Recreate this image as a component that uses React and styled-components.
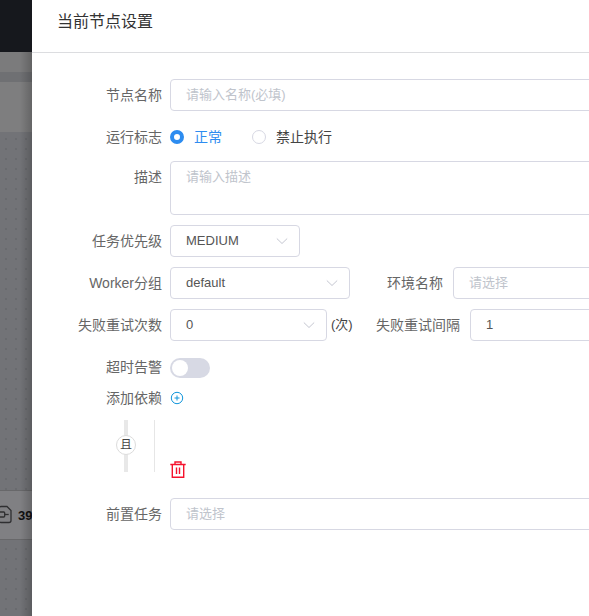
import React from "react";
import styled, { createGlobalStyle } from "styled-components";

const GlobalStyle = createGlobalStyle`
  html, body {
    margin: 0;
    padding: 0;
    background: #fff;
  }
  body {
    font-family: "Liberation Sans", "Noto Sans CJK SC", sans-serif;
    -webkit-font-smoothing: antialiased;
  }
`;

const Page = styled.div`
  display: flex;
  width: 589px;
  height: 616px;
  overflow: hidden;
`;

const Backdrop = styled.div`
  position: relative;
  width: 32px;
  flex: none;
  display: flex;
  flex-direction: column;
  overflow: hidden;
  background-color: #727377;
  background-image: radial-gradient(circle, #606165 0.5px, transparent 0.9px);
  background-size: 10px 10px;
  background-position: 1px 4px;

  &::after {
    content: "";
    position: absolute;
    inset: 52px 0 0 0;
    background: linear-gradient(90deg, rgba(0, 0, 0, 0) 0, rgba(0, 0, 0, 0) 20px, rgba(0, 0, 0, 0.2) 32px);
  }
`;

const Topbar = styled.div`
  height: 52px;
  flex: none;
  background: #16181d;
`;

const Ribbon = styled.div`
  height: 80px;
  flex: none;
  background: linear-gradient(
    180deg,
    #7b7b7c 0,
    #7b7b7c 20px,
    #6f7073 20px,
    #6f7073 30px,
    #7e7e7f 30px,
    #7e7e7f 100%
  );
`;

const NodeCard = styled.div`
  position: absolute;
  left: -40px;
  top: 490px;
  width: 140px;
  height: 50px;
  display: flex;
  align-items: center;
  gap: 5px;
  padding-left: 36px;
  box-sizing: border-box;
  color: #111;
  font-size: 13px;
  font-weight: 700;
  background: #808083;
  border-top: 1px solid #68686a;
  border-bottom: 1px solid #68686a;
`;

const Drawer = styled.div`
  flex: 1;
  min-width: 0;
  display: flex;
  flex-direction: column;
  background: #fff;
`;

const DrawerHeader = styled.div`
  height: 53px;
  flex: none;
  box-sizing: border-box;
  padding: 12px 0 0 25px;
  font-size: 16px;
  line-height: 20px;
  color: #333;
  border-bottom: 1px solid #dcdde0;
`;

const Form = styled.div`
  display: flex;
  flex-direction: column;
  padding-top: 26px;
  font-size: 14px;
  line-height: 20px;
  color: #666;
`;

const Row = styled.div`
  display: flex;
  align-items: ${({ $top }) => ($top ? "flex-start" : "center")};
  height: ${({ $h }) => $h}px;
  margin-top: ${({ $mt }) => $mt || 0}px;
  margin-bottom: ${({ $mb }) => $mb}px;
`;

const Label = styled.label`
  width: 138px;
  flex: none;
  padding-right: 8px;
  box-sizing: border-box;
  text-align: right;
  color: #666;
  white-space: nowrap;
  padding-top: ${({ $pt }) => $pt || 0}px;
`;

const InlineLabel = styled.span`
  width: ${({ $w }) => $w}px;
  flex: none;
  text-align: right;
  padding-right: 10px;
  box-sizing: border-box;
  white-space: nowrap;
`;

const Field = styled.div`
  display: flex;
  align-items: ${({ $top }) => ($top ? "flex-start" : "center")};
  justify-content: space-between;
  box-sizing: border-box;
  flex: none;
  width: ${({ $w }) => $w}px;
  height: ${({ $h }) => $h || 32}px;
  padding: ${({ $top }) => ($top ? "5px 11px 5px 15px" : "0 11px 0 15px")};
  border: 1px solid #d7d8e3;
  border-radius: 4px;
  background: #fff;
  font-size: 13px;
  color: ${({ $muted }) => ($muted ? "#c0c4cc" : "#555")};
`;

const Radios = styled.div`
  display: flex;
  align-items: center;
  gap: 8px;
`;

const RadioDot = styled.span`
  width: 14px;
  height: 14px;
  box-sizing: border-box;
  border-radius: 50%;
  border: ${({ $on }) => ($on ? "4.5px solid #2d8cf0" : "1px solid #d7d8e3")};
  background: #fff;
`;

const RadioText = styled.span`
  color: ${({ $on }) => ($on ? "#2d8cf0" : "#444")};
  margin-right: ${({ $on }) => ($on ? 22 : 0)}px;
  margin-left: 2px;
`;

const Unit = styled.span`
  width: 41px;
  flex: none;
  padding-left: 4px;
  box-sizing: border-box;
  color: #444;
  font-size: 13px;
  white-space: nowrap;
`;

const Toggle = styled.span`
  position: relative;
  width: 40px;
  height: 20px;
  margin-top: 2px;
  border-radius: 10px;
  background: #d7d9e4;
`;

const Knob = styled.span`
  position: absolute;
  left: 2px;
  top: 2px;
  width: 16px;
  height: 16px;
  border-radius: 50%;
  background: #fff;
`;

const Relation = styled.div`
  display: flex;
  height: 52px;
  margin-left: 92px;
`;

const Rail = styled.div`
  position: relative;
  width: 4px;
  height: 52px;
  background: #e8e8e8;
  flex: none;
`;

const Badge = styled.span`
  position: absolute;
  left: -8px;
  top: 15px;
  width: 20px;
  height: 20px;
  box-sizing: border-box;
  display: flex;
  align-items: center;
  justify-content: center;
  border-radius: 50%;
  border: 1px solid #dcdcdc;
  background: #fff;
  font-size: 12px;
  color: #444;
`;

const Divider = styled.div`
  width: 1px;
  height: 52px;
  margin-left: 26px;
  background: #e6e6e6;
  flex: none;
`;

const Trash = styled.div`
  align-self: flex-end;
  margin: 0 0 -6px 15px;
  height: 17px;
`;

const Chevron = () => (
  <svg width="12" height="12" viewBox="0 0 12 12" fill="none" stroke="#c4c6d0" strokeWidth="1">
    <path d="M.8 3.5 6 8.5 11.2 3.5" />
  </svg>
);

const PlusCircle = () => (
  <svg width="14" height="14" viewBox="0 0 14 14" fill="none" stroke="#1296db" strokeWidth="1">
    <circle cx="7" cy="7" r="5.7" />
    <path d="M4.5 7h5M7 4.5v5" />
  </svg>
);

const TrashIcon = () => (
  <svg width="16" height="17" viewBox="0 0 16 17" fill="none" stroke="#f5122c" strokeWidth="1.4">
    <path d="M.3 3.5h15.4M5 3.2V1h6v2.2M2.3 3.5v12.8h11.4V3.5M6.5 6.5v6.5M9.5 6.5v6.5" />
  </svg>
);

const NodeIcon = () => (
  <svg width="17" height="20" viewBox="0 0 17 20" fill="none" stroke="#2f2f31" strokeWidth="1.3" style={{ flex: "none" }}>
    <path d="M3 5V3.5A2 2 0 0 1 5 1.5h6l4 4v10a2 2 0 0 1-2 2H5a2 2 0 0 1-2-2V14" />
    <rect x="0.7" y="7" width="8" height="5" rx="1" />
    <path d="M8.7 9.5h4" />
  </svg>
);

export default function App() {
  return (
    <Page>
      <GlobalStyle />
      <Backdrop>
        <Topbar />
        <Ribbon />
        <NodeCard>
          <NodeIcon />
          <span>39</span>
        </NodeCard>
      </Backdrop>
      <Drawer>
        <DrawerHeader>当前节点设置</DrawerHeader>
        <Form>
          <Row $h={32} $mb={10}>
            <Label>节点名称</Label>
            <Field $w={440} $muted>请输入名称(必填)</Field>
          </Row>
          <Row $h={32} $mb={8}>
            <Label>运行标志</Label>
            <Radios>
              <RadioDot $on />
              <RadioText $on>正常</RadioText>
              <RadioDot />
              <RadioText>禁止执行</RadioText>
            </Radios>
          </Row>
          <Row $top $h={54} $mb={10}>
            <Label $pt={6}>描述</Label>
            <Field $top $w={440} $h={54} $muted>请输入描述</Field>
          </Row>
          <Row $h={32} $mb={10}>
            <Label>任务优先级</Label>
            <Field $w={130}>MEDIUM<Chevron /></Field>
          </Row>
          <Row $h={32} $mb={10}>
            <Label>Worker分组</Label>
            <Field $w={180}>default<Chevron /></Field>
            <InlineLabel $w={103}>环境名称</InlineLabel>
            <Field $w={200} $muted>请选择</Field>
          </Row>
          <Row $h={32} $mb={10}>
            <Label>失败重试次数</Label>
            <Field $w={157}>0<Chevron /></Field>
            <Unit>(次)</Unit>
            <InlineLabel $w={102}>失败重试间隔</InlineLabel>
            <Field $w={200}>1</Field>
          </Row>
          <Row $h={32} $mb={0}>
            <Label>超时告警</Label>
            <Toggle><Knob /></Toggle>
          </Row>
          <Row $h={30} $mb={7}>
            <Label>添加依赖</Label>
            <PlusCircle />
          </Row>
          <Relation>
            <Rail><Badge>且</Badge></Rail>
            <Divider />
            <Trash><TrashIcon /></Trash>
          </Relation>
          <Row $h={32} $mt={26} $mb={0}>
            <Label>前置任务</Label>
            <Field $w={440} $muted>请选择</Field>
          </Row>
        </Form>
      </Drawer>
    </Page>
  );
}
